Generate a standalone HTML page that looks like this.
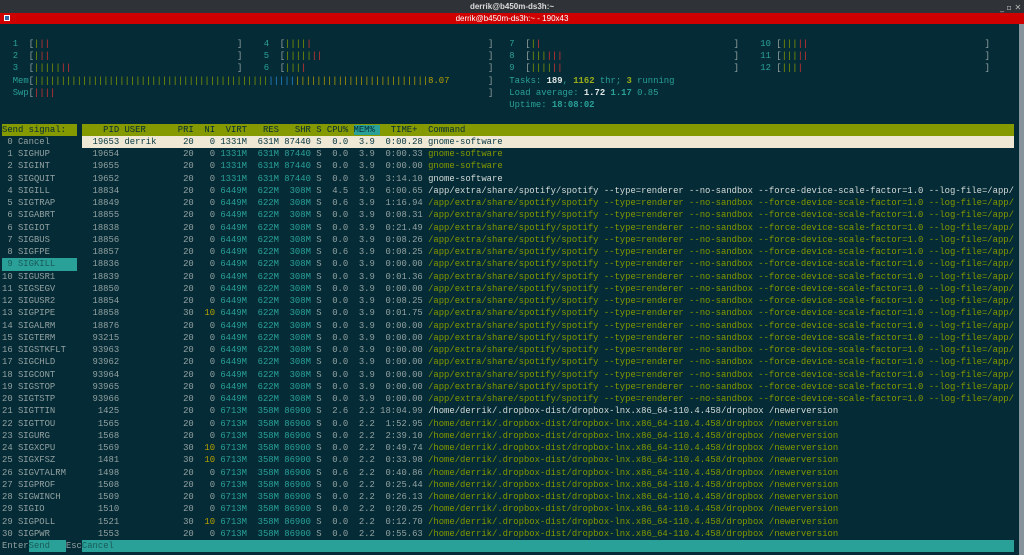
<!DOCTYPE html>
<html><head><meta charset="utf-8"><style>
*{margin:0;padding:0;box-sizing:border-box}
body{width:1024px;height:555px;overflow:hidden;background:#042b36;font-family:"Liberation Mono",monospace;}
#tb{position:absolute;left:0;top:0;width:1024px;height:13px;background:#2f3337;color:#dcdcdc;font:bold 8px "Liberation Sans",sans-serif;text-align:center;line-height:13px}
#rb{position:absolute;left:0;top:13px;width:1024px;height:11px;background:#cf0000;color:#fff;font:8px "Liberation Sans",sans-serif;text-align:center;line-height:11px}
#sb{position:absolute;left:1019px;top:24px;width:5px;height:531px;background:#86939a}
#t{position:absolute;left:2px;top:25.6px;font-size:8.9px;color:#93a1a1}
.l{height:12.25px;line-height:12.25px;white-space:pre;position:relative;width:1017px}
.c{position:absolute;top:0}
.lp{display:inline-block;width:15ch;height:12.25px;vertical-align:top}
.pp{display:inline-block;width:175ch;height:12.25px;vertical-align:top}
.t{color:#2aa198}.g{color:#859900}.r{color:#dc322f}.b{color:#268bd2}.y{color:#b5a000}.w{color:#d5dbd8}
.cy{color:#2aa198}.bw{color:#dfe5e3;font-weight:bold}.bc{color:#2aa198;font-weight:bold}.bg{color:#9aac1a;font-weight:bold}
.hd{background:#859900;color:#042b36}
.sel{background:#eee8d5;color:#073642}
</style></head><body>
<div id="tb">derrik@b450m-ds3h:~</div>
<div id="rb">derrik@b450m-ds3h:~ - 190x43</div>
<div style="position:absolute;left:4px;top:15px;width:6px;height:6px;background:#3465a4;border:1px solid #fff"></div>
<div style="position:absolute;left:1000px;top:3px;color:#bbb;font:8px 'DejaVu Sans',sans-serif">_ ▫ ✕</div>
<div id="sb"></div>
<div id="t">
<div class="l"></div>
<div class="l"><span class="c cy" style="left:10.7px">1</span><span class="c" style="left:26.7px">[<span class="g">|</span><span class="r">||</span></span><span class="c" style="left:235px">]</span><span class="c cy" style="left:261.7px">4</span><span class="c" style="left:277.7px">[<span class="g">||||</span><span class="r">|</span></span><span class="c" style="left:486px">]</span><span class="c cy" style="left:507.3px">7</span><span class="c" style="left:523.3px">[<span class="g">|</span><span class="r">|</span></span><span class="c" style="left:731.6px">]</span><span class="c cy" style="left:758.3px">10</span><span class="c" style="left:774.3px">[<span class="g">|||</span><span class="r">||</span></span><span class="c" style="left:982.6px">]</span></div>
<div class="l"><span class="c cy" style="left:10.7px">2</span><span class="c" style="left:26.7px">[<span class="g">|</span><span class="r">||</span></span><span class="c" style="left:235px">]</span><span class="c cy" style="left:261.7px">5</span><span class="c" style="left:277.7px">[<span class="g">|||||</span><span class="r">||</span></span><span class="c" style="left:486px">]</span><span class="c cy" style="left:507.3px">8</span><span class="c" style="left:523.3px">[<span class="g">|||</span><span class="r">|||</span></span><span class="c" style="left:731.6px">]</span><span class="c cy" style="left:758.3px">11</span><span class="c" style="left:774.3px">[<span class="g">|||</span><span class="r">||</span></span><span class="c" style="left:982.6px">]</span></div>
<div class="l"><span class="c cy" style="left:10.7px">3</span><span class="c" style="left:26.7px">[<span class="g">|||||</span><span class="r">||</span></span><span class="c" style="left:235px">]</span><span class="c cy" style="left:261.7px">6</span><span class="c" style="left:277.7px">[<span class="g">|||</span><span class="r">|</span></span><span class="c" style="left:486px">]</span><span class="c cy" style="left:507.3px">9</span><span class="c" style="left:523.3px">[<span class="g">||||</span><span class="r">||</span></span><span class="c" style="left:731.6px">]</span><span class="c cy" style="left:758.3px">12</span><span class="c" style="left:774.3px">[<span class="g">|||</span><span class="r">|</span></span><span class="c" style="left:982.6px">]</span></div>
<div class="l"><span class="c" style="left:10.7px"><span class="cy">Mem</span>[<span class="g">||||||||||||||||||||||||||||||||||||||||||||</span><span class="b">|||||</span><span class="y">|||||||||||||||||||||||||</span><span class="y">8.07</span></span><span class="c" style="left:486px">]</span><span class="c" style="left:507.3px"><span class="cy">Tasks: </span><span class="bw">189</span><span class="cy">, </span><span class="bg">1162</span><span class="cy"> thr; </span><span class="bg">3</span><span class="cy"> running</span></span></div>
<div class="l"><span class="c" style="left:10.7px"><span class="cy">Swp</span>[<span class="r">||||</span></span><span class="c" style="left:486px">]</span><span class="c" style="left:507.3px"><span class="cy">Load average: </span><span class="bw">1.72 </span><span class="bc">1.17 </span><span class="cy">0.85</span></span></div>
<div class="l"><span class="c" style="left:507.3px"><span class="cy">Uptime: </span><span class="bc">18:08:02</span></span></div>
<div class="l"></div>
<div class="l"><span class="lp"><span class="hd" style="display:inline-block;width:14ch;height:12.25px">Send signal:</span></span><span class="pp hd">    PID USER      PRI  NI  VIRT   RES   SHR S CPU% <span style="background:#2aa198">MEM% </span>  TIME+  Command</span></div>
<div class="l"><span class="lp"> 0 Cancel</span><span class="pp sel">  19653 derrik     20   0 1331M  631M 87440 S  0.0  3.9  0:00.28 gnome-software</span></div>
<div class="l"><span class="lp"> 1 SIGHUP</span><span class="pp">  19654            20   0 <span class="t">1331M  631M 87440</span> S  0.0  3.9  0:00.33 <span class="g">gnome-software</span></span></div>
<div class="l"><span class="lp"> 2 SIGINT</span><span class="pp">  19655            20   0 <span class="t">1331M  631M 87440</span> S  0.0  3.9  0:00.00 <span class="g">gnome-software</span></span></div>
<div class="l"><span class="lp"> 3 SIGQUIT</span><span class="pp">  19652            20   0 <span class="t">1331M  631M 87440</span> S  0.0  3.9  3:14.10 <span class="w">gnome-software</span></span></div>
<div class="l"><span class="lp"> 4 SIGILL</span><span class="pp">  18834            20   0 <span class="t">6449M  622M  308M</span> S  4.5  3.9  6:00.65 <span class="w">/app/extra/share/spotify/spotify --type=renderer --no-sandbox --force-device-scale-factor=1.0 --log-file=/app/</span></span></div>
<div class="l"><span class="lp"> 5 SIGTRAP</span><span class="pp">  18849            20   0 <span class="t">6449M  622M  308M</span> S  0.6  3.9  1:16.94 <span class="g">/app/extra/share/spotify/spotify --type=renderer --no-sandbox --force-device-scale-factor=1.0 --log-file=/app/</span></span></div>
<div class="l"><span class="lp"> 6 SIGABRT</span><span class="pp">  18855            20   0 <span class="t">6449M  622M  308M</span> S  0.0  3.9  0:08.31 <span class="g">/app/extra/share/spotify/spotify --type=renderer --no-sandbox --force-device-scale-factor=1.0 --log-file=/app/</span></span></div>
<div class="l"><span class="lp"> 6 SIGIOT</span><span class="pp">  18838            20   0 <span class="t">6449M  622M  308M</span> S  0.0  3.9  0:21.49 <span class="g">/app/extra/share/spotify/spotify --type=renderer --no-sandbox --force-device-scale-factor=1.0 --log-file=/app/</span></span></div>
<div class="l"><span class="lp"> 7 SIGBUS</span><span class="pp">  18856            20   0 <span class="t">6449M  622M  308M</span> S  0.0  3.9  0:08.26 <span class="g">/app/extra/share/spotify/spotify --type=renderer --no-sandbox --force-device-scale-factor=1.0 --log-file=/app/</span></span></div>
<div class="l"><span class="lp"> 8 SIGFPE</span><span class="pp">  18857            20   0 <span class="t">6449M  622M  308M</span> S  0.6  3.9  0:08.25 <span class="g">/app/extra/share/spotify/spotify --type=renderer --no-sandbox --force-device-scale-factor=1.0 --log-file=/app/</span></span></div>
<div class="l"><span class="lp"><span style="display:inline-block;width:14ch;height:12.25px;background:#2aa198;color:#1a5a5a"> 9 SIGKILL</span></span><span class="pp">  18836            20   0 <span class="t">6449M  622M  308M</span> S  0.0  3.9  0:00.00 <span class="g">/app/extra/share/spotify/spotify --type=renderer --no-sandbox --force-device-scale-factor=1.0 --log-file=/app/</span></span></div>
<div class="l"><span class="lp">10 SIGUSR1</span><span class="pp">  18839            20   0 <span class="t">6449M  622M  308M</span> S  0.0  3.9  0:01.36 <span class="g">/app/extra/share/spotify/spotify --type=renderer --no-sandbox --force-device-scale-factor=1.0 --log-file=/app/</span></span></div>
<div class="l"><span class="lp">11 SIGSEGV</span><span class="pp">  18850            20   0 <span class="t">6449M  622M  308M</span> S  0.0  3.9  0:00.00 <span class="g">/app/extra/share/spotify/spotify --type=renderer --no-sandbox --force-device-scale-factor=1.0 --log-file=/app/</span></span></div>
<div class="l"><span class="lp">12 SIGUSR2</span><span class="pp">  18854            20   0 <span class="t">6449M  622M  308M</span> S  0.0  3.9  0:08.25 <span class="g">/app/extra/share/spotify/spotify --type=renderer --no-sandbox --force-device-scale-factor=1.0 --log-file=/app/</span></span></div>
<div class="l"><span class="lp">13 SIGPIPE</span><span class="pp">  18858            30  <span class="y">10</span> <span class="t">6449M  622M  308M</span> S  0.0  3.9  0:01.75 <span class="g">/app/extra/share/spotify/spotify --type=renderer --no-sandbox --force-device-scale-factor=1.0 --log-file=/app/</span></span></div>
<div class="l"><span class="lp">14 SIGALRM</span><span class="pp">  18876            20   0 <span class="t">6449M  622M  308M</span> S  0.0  3.9  0:00.00 <span class="g">/app/extra/share/spotify/spotify --type=renderer --no-sandbox --force-device-scale-factor=1.0 --log-file=/app/</span></span></div>
<div class="l"><span class="lp">15 SIGTERM</span><span class="pp">  93215            20   0 <span class="t">6449M  622M  308M</span> S  0.0  3.9  0:00.00 <span class="g">/app/extra/share/spotify/spotify --type=renderer --no-sandbox --force-device-scale-factor=1.0 --log-file=/app/</span></span></div>
<div class="l"><span class="lp">16 SIGSTKFLT</span><span class="pp">  93963            20   0 <span class="t">6449M  622M  308M</span> S  0.0  3.9  0:00.00 <span class="g">/app/extra/share/spotify/spotify --type=renderer --no-sandbox --force-device-scale-factor=1.0 --log-file=/app/</span></span></div>
<div class="l"><span class="lp">17 SIGCHLD</span><span class="pp">  93962            20   0 <span class="t">6449M  622M  308M</span> S  0.0  3.9  0:00.00 <span class="g">/app/extra/share/spotify/spotify --type=renderer --no-sandbox --force-device-scale-factor=1.0 --log-file=/app/</span></span></div>
<div class="l"><span class="lp">18 SIGCONT</span><span class="pp">  93964            20   0 <span class="t">6449M  622M  308M</span> S  0.0  3.9  0:00.00 <span class="g">/app/extra/share/spotify/spotify --type=renderer --no-sandbox --force-device-scale-factor=1.0 --log-file=/app/</span></span></div>
<div class="l"><span class="lp">19 SIGSTOP</span><span class="pp">  93965            20   0 <span class="t">6449M  622M  308M</span> S  0.0  3.9  0:00.00 <span class="g">/app/extra/share/spotify/spotify --type=renderer --no-sandbox --force-device-scale-factor=1.0 --log-file=/app/</span></span></div>
<div class="l"><span class="lp">20 SIGTSTP</span><span class="pp">  93966            20   0 <span class="t">6449M  622M  308M</span> S  0.0  3.9  0:00.00 <span class="g">/app/extra/share/spotify/spotify --type=renderer --no-sandbox --force-device-scale-factor=1.0 --log-file=/app/</span></span></div>
<div class="l"><span class="lp">21 SIGTTIN</span><span class="pp">   1425            20   0 <span class="t">6713M  358M 86900</span> S  2.6  2.2 18:04.99 <span class="w">/home/derrik/.dropbox-dist/dropbox-lnx.x86_64-110.4.458/dropbox /newerversion</span></span></div>
<div class="l"><span class="lp">22 SIGTTOU</span><span class="pp">   1565            20   0 <span class="t">6713M  358M 86900</span> S  0.0  2.2  1:52.95 <span class="g">/home/derrik/.dropbox-dist/dropbox-lnx.x86_64-110.4.458/dropbox /newerversion</span></span></div>
<div class="l"><span class="lp">23 SIGURG</span><span class="pp">   1568            20   0 <span class="t">6713M  358M 86900</span> S  0.0  2.2  2:39.10 <span class="g">/home/derrik/.dropbox-dist/dropbox-lnx.x86_64-110.4.458/dropbox /newerversion</span></span></div>
<div class="l"><span class="lp">24 SIGXCPU</span><span class="pp">   1569            30  <span class="y">10</span> <span class="t">6713M  358M 86900</span> S  0.0  2.2  0:49.74 <span class="g">/home/derrik/.dropbox-dist/dropbox-lnx.x86_64-110.4.458/dropbox /newerversion</span></span></div>
<div class="l"><span class="lp">25 SIGXFSZ</span><span class="pp">   1481            30  <span class="y">10</span> <span class="t">6713M  358M 86900</span> S  0.0  2.2  0:33.98 <span class="g">/home/derrik/.dropbox-dist/dropbox-lnx.x86_64-110.4.458/dropbox /newerversion</span></span></div>
<div class="l"><span class="lp">26 SIGVTALRM</span><span class="pp">   1498            20   0 <span class="t">6713M  358M 86900</span> S  0.6  2.2  0:40.86 <span class="g">/home/derrik/.dropbox-dist/dropbox-lnx.x86_64-110.4.458/dropbox /newerversion</span></span></div>
<div class="l"><span class="lp">27 SIGPROF</span><span class="pp">   1508            20   0 <span class="t">6713M  358M 86900</span> S  0.0  2.2  0:25.44 <span class="g">/home/derrik/.dropbox-dist/dropbox-lnx.x86_64-110.4.458/dropbox /newerversion</span></span></div>
<div class="l"><span class="lp">28 SIGWINCH</span><span class="pp">   1509            20   0 <span class="t">6713M  358M 86900</span> S  0.0  2.2  0:26.13 <span class="g">/home/derrik/.dropbox-dist/dropbox-lnx.x86_64-110.4.458/dropbox /newerversion</span></span></div>
<div class="l"><span class="lp">29 SIGIO</span><span class="pp">   1510            20   0 <span class="t">6713M  358M 86900</span> S  0.0  2.2  0:20.25 <span class="g">/home/derrik/.dropbox-dist/dropbox-lnx.x86_64-110.4.458/dropbox /newerversion</span></span></div>
<div class="l"><span class="lp">29 SIGPOLL</span><span class="pp">   1521            30  <span class="y">10</span> <span class="t">6713M  358M 86900</span> S  0.0  2.2  0:12.70 <span class="g">/home/derrik/.dropbox-dist/dropbox-lnx.x86_64-110.4.458/dropbox /newerversion</span></span></div>
<div class="l"><span class="lp">30 SIGPWR</span><span class="pp">   1553            20   0 <span class="t">6713M  358M 86900</span> S  0.0  2.2  0:55.63 <span class="g">/home/derrik/.dropbox-dist/dropbox-lnx.x86_64-110.4.458/dropbox /newerversion</span></span></div>
<div class="l">Enter<span style="display:inline-block;width:7ch;height:12.25px;vertical-align:top;background:#2aa198;color:#1a5a5a">Send</span>Esc<span style="display:inline-block;width:175ch;height:12.25px;vertical-align:top;background:#2aa198;color:#1a5a5a">Cancel</span></div>
</div>
</body></html>
